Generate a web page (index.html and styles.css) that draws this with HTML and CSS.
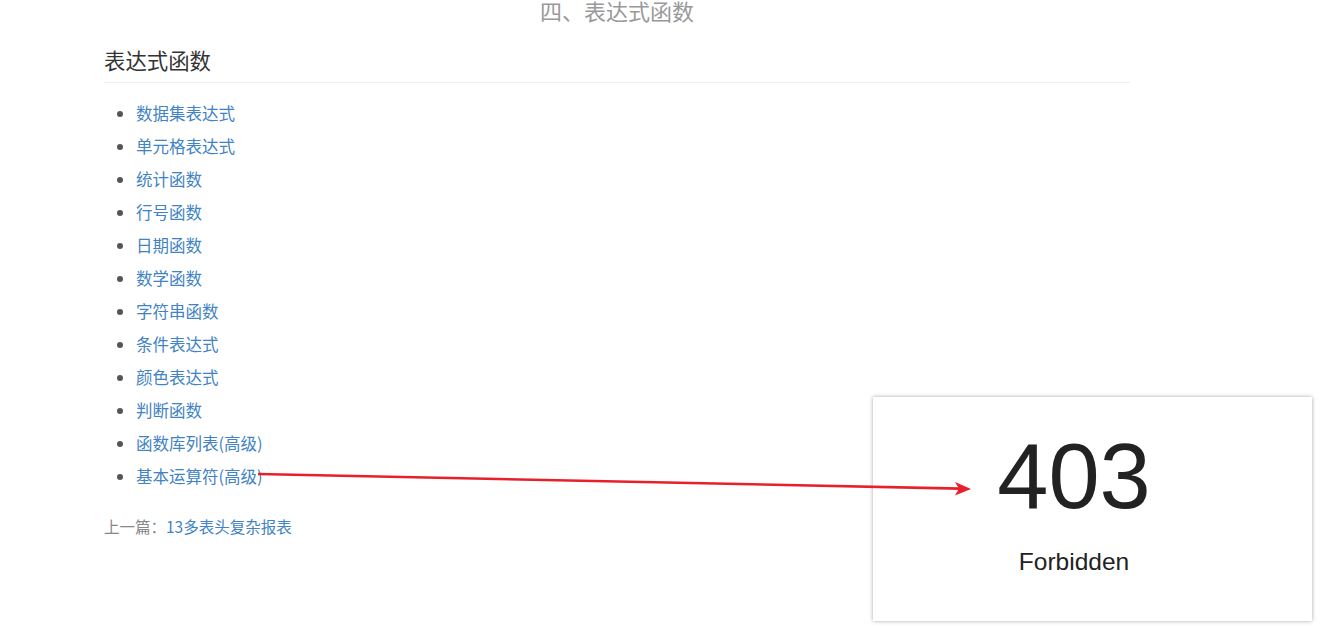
FILE: index.html
```html
<!DOCTYPE html>
<html lang="zh-CN">
<head>
<meta charset="utf-8">
<title>表达式函数</title>
<link rel="stylesheet" href="styles.css">
</head>
<body>
<div class="page">
  <h1 class="title">四、表达式函数</h1>
  <h2 class="heading">表达式函数</h2>
  <ul class="toc">
    <li><a href="#">数据集表达式</a></li>
    <li><a href="#">单元格表达式</a></li>
    <li><a href="#">统计函数</a></li>
    <li><a href="#">行号函数</a></li>
    <li><a href="#">日期函数</a></li>
    <li><a href="#">数学函数</a></li>
    <li><a href="#">字符串函数</a></li>
    <li><a href="#">条件表达式</a></li>
    <li><a href="#">颜色表达式</a></li>
    <li><a href="#">判断函数</a></li>
    <li><a href="#">函数库列表(高级)</a></li>
    <li><a href="#">基本运算符(高级)</a></li>
  </ul>
  <p class="prev">上一篇：<a href="#">13多表头复杂报表</a></p>
</div>
<div class="card">
  <div class="card-body">
    <div class="code">403</div>
    <div class="msg">Forbidden</div>
  </div>
</div>
<svg class="arrow" width="1322" height="627" viewBox="0 0 1322 627" xmlns="http://www.w3.org/2000/svg">
  <line x1="258" y1="474" x2="960" y2="488.6" stroke="#e8202a" stroke-width="2.6"/>
  <polygon points="971,489 955,482 959,488.6 955,495.5" fill="#e8202a"/>
</svg>
</body>
</html>
```
FILE: styles.css
```css
html, body {
  margin: 0;
  padding: 0;
  background: #fff;
}
body {
  font-family: "Noto Sans CJK SC", "Liberation Sans", sans-serif;
  width: 1322px;
  height: 627px;
  overflow: hidden;
  position: relative;
}
.page {
  margin-left: 104px;
  width: 1026px;
}
.title {
  margin: 0;
  font-family: "Liberation Sans", "Noto Sans CJK SC", sans-serif;
  font-size: 22px;
  line-height: 25px;
  font-weight: normal;
  color: #999;
  text-align: center;
}
.heading {
  margin: 20px 0 0;
  font-size: 21.4px;
  line-height: 30px;
  font-weight: normal;
  color: #333;
  padding-bottom: 7px;
  border-bottom: 1px solid #eee;
}
.toc {
  margin: 14px 0 0;
  padding-left: 32px;
  color: #555;
}
.toc li {
  font-size: 16.5px;
  line-height: 33px;
}
a {
  color: #4183c4;
  text-decoration: none;
}
.prev {
  margin: 23px 0 0;
  font-size: 15.5px;
  line-height: 20px;
  color: #888;
}
.card {
  position: absolute;
  left: 873px;
  top: 397px;
  width: 439px;
  height: 224px;
  background: #fff;
  box-shadow: 0 0 4px rgba(0, 0, 0, 0.35);
}
.card-body {
  width: 402px;
  padding-top: 33px;
  text-align: center;
  font-family: "Liberation Sans", Arial, sans-serif;
  color: #222;
}
.code {
  font-size: 92px;
  line-height: 92px;
}
.msg {
  margin-top: 26px;
  font-size: 24.5px;
  line-height: 28px;
}
.arrow {
  position: absolute;
  left: 0;
  top: 0;
  pointer-events: none;
}
```
